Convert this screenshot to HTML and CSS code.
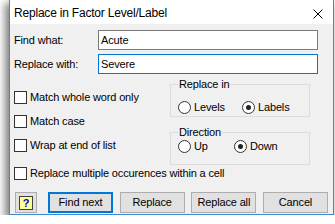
FILE: index.html
```html
<!DOCTYPE html>
<html>
<head>
<meta charset="utf-8">
<link rel="stylesheet" href="styles.css">
</head>
<body>
<div class="window">
  <div class="titlebar">
    <span class="title">Replace in Factor Level/Label</span>
    <svg class="close" width="10" height="10" viewBox="0 0 10 10"><path d="M0.5 0.5 L9.5 9.5 M9.5 0.5 L0.5 9.5" stroke="#000" stroke-width="1" fill="none"/></svg>
  </div>
  <div class="body">
    <div class="fields">
      <span class="flabel">Find what:</span>
      <div class="input">Acute</div>
      <span class="flabel">Replace with:</span>
      <div class="input focus">Severe</div>
    </div>
    <div class="options">
      <div class="checks">
        <div class="check"><span class="box"></span><span>Match whole word only</span></div>
        <div class="check"><span class="box"></span><span>Match case</span></div>
        <div class="check"><span class="box"></span><span>Wrap at end of list</span></div>
      </div>
      <div class="groups">
        <div class="group g1">
          <span class="legend">Replace in</span>
          <div class="radios r1">
            <div class="radio"><span class="circle"></span><span>Levels</span></div>
            <div class="radio"><span class="circle on"></span><span>Labels</span></div>
          </div>
        </div>
        <div class="group g2">
          <span class="legend">Direction</span>
          <div class="radios r2">
            <div class="radio"><span class="circle"></span><span>Up</span></div>
            <div class="radio"><span class="circle on"></span><span>Down</span></div>
          </div>
        </div>
      </div>
    </div>
    <div class="check"><span class="box"></span><span>Replace multiple occurences within a cell</span></div>
    <div class="buttons">
      <div class="help"><span class="helpicon">?</span></div>
      <div class="btns">
        <div class="btn default">Find next</div>
        <div class="btn">Replace</div>
        <div class="btn">Replace all</div>
        <div class="btn">Cancel</div>
      </div>
    </div>
  </div>
</div>
</body>
</html>
```

FILE: styles.css
```css
html, body {
  margin: 0;
  padding: 0;
  background: #ffffff;
}
body {
  font-family: "Liberation Sans", Arial, sans-serif;
  font-size: 11px;
  letter-spacing: -0.15px;
  color: #000;
  overflow: hidden;
}
.window {
  margin-left: 9px;
  width: 325px;
  box-sizing: border-box;
  border: 1px solid #3c8ad4;
  border-top: none;
  background: #fff;
  box-shadow: -3px 4px 8px 1px rgba(0, 0, 0, 0.5);
}
.titlebar {
  height: 24px;
  box-sizing: border-box;
  padding: 2px 10px 0 4px;
  display: flex;
  justify-content: space-between;
  align-items: flex-start;
  background: #fff;
}
.title {
  font-size: 12px;
  letter-spacing: -0.2px;
  line-height: 22px;
}
.close {
  margin-top: 7px;
  display: block;
}
.body {
  background: #f0f0f0;
  height: 190px;
  box-sizing: border-box;
  padding: 6px 0 1px 4px;
}
.fields {
  display: grid;
  grid-template-columns: 84px 220px;
  grid-auto-rows: 20px;
  row-gap: 4px;
  align-items: center;
}
.flabel {
  line-height: 13px;
}
.input {
  height: 20px;
  box-sizing: border-box;
  border: 1px solid #7a7a7a;
  background: #fff;
  padding: 0 2px;
  line-height: 18px;
}
.input.focus {
  border-color: #0078d7;
}
.options {
  height: 93px;
  display: grid;
  grid-template-columns: 156px 140px;
}
.checks {
  padding-top: 17px;
  display: flex;
  flex-direction: column;
  gap: 11px;
}
.check {
  display: flex;
  align-items: center;
  height: 13px;
  line-height: 13px;
  white-space: nowrap;
}
.box {
  width: 13px;
  height: 13px;
  box-sizing: border-box;
  border: 1px solid #333;
  background: #fff;
  margin-right: 3px;
  flex: none;
}
.groups {
  display: flex;
  flex-direction: column;
}
.group {
  height: 33px;
  box-sizing: border-box;
  border: 1px solid #dcdcdc;
  display: flex;
  flex-direction: column;
  align-items: flex-start;
}
.g1 {
  margin-top: 10px;
}
.g2 {
  margin-top: 15px;
}
.legend {
  margin: -7px 0 0 7px;
  padding: 0 1px;
  background: #f0f0f0;
  line-height: 13px;
  height: 13px;
}
.radios {
  display: grid;
  padding-left: 7px;
}
.r1 {
  grid-template-columns: 64px auto;
  margin-top: 10px;
}
.r2 {
  grid-template-columns: 56px auto;
  margin-top: 1px;
}
.radio {
  display: flex;
  align-items: center;
  height: 13px;
  line-height: 13px;
}
.circle {
  width: 13px;
  height: 13px;
  box-sizing: border-box;
  border: 1px solid #333;
  border-radius: 50%;
  background: #fff;
  margin-right: 3px;
  display: flex;
  align-items: center;
  justify-content: center;
  flex: none;
}
.circle.on::after {
  content: "";
  width: 5px;
  height: 5px;
  border-radius: 50%;
  background: #222;
}
.buttons {
  margin-top: 12px;
  display: flex;
  align-items: flex-start;
}
.help {
  margin-left: 1px;
  width: 22px;
  height: 21px;
  box-sizing: border-box;
  border: 1px solid #adadad;
  background: #e1e1e1;
  display: flex;
  align-items: center;
  justify-content: center;
}
.helpicon {
  width: 14px;
  height: 14px;
  box-sizing: border-box;
  border: 1px solid #404040;
  background: #ffff99;
  color: #0000d0;
  font-weight: bold;
  font-size: 11px;
  line-height: 12px;
  text-align: center;
  letter-spacing: 0;
}
.btns {
  margin-left: 11px;
  display: flex;
  gap: 6.67px;
}
.btn {
  width: 65px;
  height: 21px;
  box-sizing: border-box;
  border: 1px solid #adadad;
  background: #e1e1e1;
  display: flex;
  align-items: center;
  justify-content: center;
  line-height: 13px;
}
.btn.default {
  border: 2px solid #0078d7;
}
```
